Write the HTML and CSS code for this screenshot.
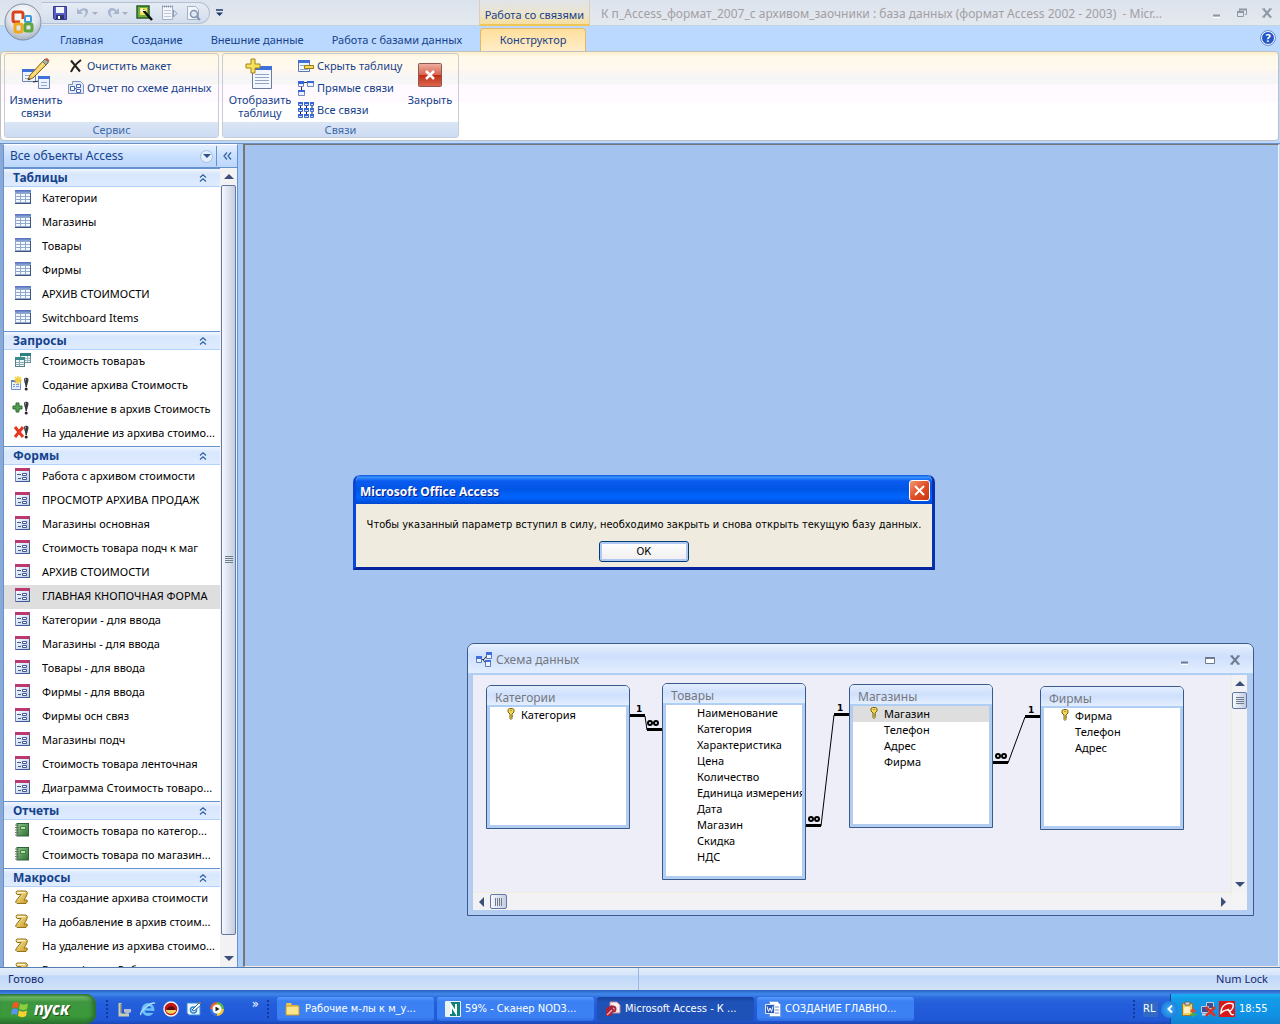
FILE: index.html
```
<!DOCTYPE html>
<html lang="ru">
<head>
    <meta charset="UTF-8">
    <title>Microsoft Access</title>
    <link rel="stylesheet" href="styles.css">
</head>

<body>
    <!-- Иконки, которые повторяются на странице -->
    <svg class="sprite" aria-hidden="true">
        <defs>
            <linearGradient id="g-head" x1="0" y1="0" x2="0" y2="1">
                <stop offset="0" stop-color="#4f6bb5"/>
                <stop offset="1" stop-color="#8fa8e0"/>
            </linearGradient>
            <linearGradient id="g-paper" x1="0" y1="0" x2="1" y2="1">
                <stop offset="0" stop-color="#ffffff"/>
                <stop offset="1" stop-color="#b9cbee"/>
            </linearGradient>
            <linearGradient id="g-gold" x1="0" y1="0" x2="1" y2="1">
                <stop offset="0" stop-color="#fff3a8"/>
                <stop offset="1" stop-color="#c8961e"/>
            </linearGradient>
            <linearGradient id="g-green" x1="0" y1="0" x2="1" y2="1">
                <stop offset="0" stop-color="#8fca8b"/>
                <stop offset="1" stop-color="#2d6b33"/>
            </linearGradient>
            <linearGradient id="g-red" x1="0" y1="0" x2="0" y2="1">
                <stop offset="0" stop-color="#eeb0a4"/>
                <stop offset=".5" stop-color="#d9644f"/>
                <stop offset=".5" stop-color="#c02a14"/>
                <stop offset="1" stop-color="#dd6a50"/>
            </linearGradient>
        </defs>
        <symbol id="i-table" viewBox="0 0 16 14">
            <rect x="0" y="0" width="16" height="14" fill="#93a9cc"/>
            <rect x="0" y="0" width="16" height="3" fill="url(#g-head)"/>
            <path d="M1 4h4v2H1zM6 4h4v2H6zM11 4h4v2h-4zM1 7h4v2H1zM6 7h4v2H6zM11 7h4v2h-4zM1 10h4v2H1zM6 10h4v2H6zM11 10h4v2h-4z" fill="#f4f8ff"/>
            <path d="M0 13.500h16M15.500 3v11" stroke="#3c5580"/>
        </symbol>
        <symbol id="i-form" viewBox="0 0 16 14">
            <rect x=".5" y=".5" width="14" height="13" fill="url(#g-paper)" stroke="#7289b4"/>
            <rect x="0" y="0" width="15" height="3" fill="#b83a6e"/>
            <path d="M2 6.500h4M3 10.500h3" stroke="#44598a"/>
            <path d="M7.500 5.500h4v2h-4zM7.500 9.500h4v2h-4z" fill="#fff" stroke="#44598a"/>
            <path d="M14.500 3v10.500H1" fill="none" stroke="#41598c"/>
        </symbol>
        <symbol id="i-query" viewBox="0 0 16 14">
            <rect x="5.500" y=".5" width="10" height="9" fill="#eef6f6" stroke="#6b8f98"/>
            <path d="M5 0h11v3H5z" fill="#2f7f80"/>
            <path d="M7 5.500h8M7 7.500h8M12.500 3v6" stroke="#9db8c0"/>
            <rect x=".5" y="4.500" width="9" height="9" fill="#eef6f6" stroke="#58808a"/>
            <path d="M0 4h10v3H0z" fill="#3b8b8b"/>
            <path d="M1 9.500h8M1 11.500h8M4.500 7v6" stroke="#8caab4"/>
        </symbol>
        <symbol id="i-bang" viewBox="0 0 6 14">
            <path d="M1 2.500C1 0 5.500 0 5.500 2.500C5.500 5 4 7 4 10H2.500C2.500 7 1 5 1 2.500z" fill="#33363c"/>
            <path d="M2 2.500c0-1 1-1 1-1v3z" fill="#b9bcc2"/>
            <circle cx="3.200" cy="12" r="1.500" fill="#222"/>
        </symbol>
        <symbol id="i-make" viewBox="0 0 20 16">
            <path d="M1.500 4.500h9v9h-9z" fill="#e6effc" stroke="#6c8dc6"/>
            <path d="M1 4h10v2H1z" fill="#5b80c8"/>
            <path d="M3 8.500h2M6 8.500h3M3 10.500h2M6 10.500h3" stroke="#7d9bd0"/>
            <path d="M8 0v8M4 4h8M5 1l6 6M11 1L5 7" stroke="#f1cf3a" stroke-width="1.500"/>
            <use href="#i-bang" x="13" y="1" width="6" height="14"/>
        </symbol>
        <symbol id="i-append" viewBox="0 0 20 16">
            <path d="M6 3h3v3h3v3H9v3H6V9H3V6h3z" fill="#55a04f" stroke="#2d6b33"/>
            <use href="#i-bang" x="13" y="1" width="6" height="14"/>
        </symbol>
        <symbol id="i-delete" viewBox="0 0 20 16">
            <path d="M5 3l8 10M13 3L5 13" stroke="#e8361e" stroke-width="3"/>
            <use href="#i-bang" x="13" y="1" width="6" height="14"/>
        </symbol>
        <symbol id="i-report" viewBox="0 0 14 14">
            <rect x="2" y=".5" width="11.500" height="12.500" fill="url(#g-green)" stroke="#2f6236"/>
            <path d="M5.500 3.500h5v3h-5z" fill="#b9dfb2" stroke="#3e7c42"/>
            <path d="M0 2h4M0 4.500h4M0 7h4M0 9.500h4M0 12h4" stroke="#6d7a6f"/>
        </symbol>
        <symbol id="i-macro" viewBox="0 0 14 14">
            <path d="M2 1h9l1.500 1.500-1 3.500-2.500 4h3l.5 1.500L11 13.500H2L.5 12 2 9.500l4-5H2L1 2.500z" fill="url(#g-gold)" stroke="#94701f"/>
            <path d="M3 2.500h7" stroke="#fffbe0"/>
        </symbol>
        <symbol id="i-chev" viewBox="0 0 8 8">
            <path d="M1 3.500L4 .8l3 2.700M1 7.500L4 4.800l3 2.700" fill="none" stroke="#33609f" stroke-width="1.200"/>
        </symbol>
        <symbol id="i-key" viewBox="0 0 8 12">
            <path d="M1 1.500L2.500.5h3L7 1.500V4L5 6v4.500l-1 1-1-1V6L1 4z" fill="#f0d74e" stroke="#77621a"/>
            <path d="M3.500 2.500h1M5 8h1" stroke="#77621a"/>
        </symbol>
        <symbol id="i-min" viewBox="0 0 10 10">
            <path d="M1 7.500h7" stroke="currentColor" stroke-width="2"/>
            <path d="M1 9.500h7" stroke="#fff"/>
        </symbol>
        <symbol id="i-x" viewBox="0 0 10 10">
            <path d="M1.500 1l7 8M8.500 1l-7 8" stroke="currentColor" stroke-width="2"/>
            <path d="M0 1h3M7 1h3M0 9h3M7 9h3" stroke="currentColor"/>
        </symbol>
    </svg>

    <div class="app">
        <!-- Заголовок окна -->
        <header class="titlebar">
            <button class="office" aria-label="Office">
                <svg width="38" height="38" viewBox="0 0 38 38">
                    <defs>
                        <radialGradient id="g-orb" cx=".5" cy=".3" r=".7">
                            <stop offset="0" stop-color="#ffffff"/>
                            <stop offset=".6" stop-color="#dfe4ec"/>
                            <stop offset="1" stop-color="#a8b2c2"/>
                        </radialGradient>
                    </defs>
                    <circle cx="19" cy="19" r="18" fill="url(#g-orb)" stroke="#7e8da6"/>
                    <rect x="9" y="9" width="10" height="10" rx="2" fill="none" stroke="#d9441c" stroke-width="3"/>
                    <rect x="21" y="13" width="6" height="6" rx="1" fill="none" stroke="#3f97dc" stroke-width="2"/>
                    <rect x="11" y="21" width="7" height="8" rx="1.500" fill="none" stroke="#f2a81d" stroke-width="3"/>
                    <rect x="21" y="21" width="7" height="7" rx="1.500" fill="none" stroke="#5da73c" stroke-width="3"/>
                    <rect x="16" y="16" width="4" height="4" fill="#fff4d8"/>
                </svg>
            </button>
            <div class="qat">
                <button aria-label="Сохранить">
                    <svg width="16" height="16" viewBox="0 0 16 16">
                        <path d="M1.500 1.500h13v13h-12l-1-1z" fill="#5a5fc4" stroke="#34388f"/>
                        <path d="M4 2h8v6H4z" fill="#f3f5ff"/>
                        <path d="M4 10h8v4H4z" fill="#30346e"/>
                        <path d="M6 11h2v3H6z" fill="#fff"/>
                    </svg>
                </button>
                <button aria-label="Отменить">
                    <svg width="22" height="16" viewBox="0 0 22 16">
                        <path d="M1 3v6h6L4.800 6.800C8 4 11 6 9 9.500L7.500 13C12 10 14 5 10 3.500 7 2.500 4.500 4 3.500 5.500z" fill="#a9b6d0"/>
                        <path d="M16 7h6l-3 3z" fill="#a9b0bd"/>
                    </svg>
                </button>
                <button aria-label="Вернуть">
                    <svg width="22" height="16" viewBox="0 0 22 16">
                        <path d="M13 3v6H7l2.200-2.200C6 4 3.500 6 5 9.500L6.500 13C2 11 0 5.500 4 3.500c3-1.200 5.500.5 6.500 2z" fill="#a9b6d0"/>
                        <path d="M16 7h6l-3 3z" fill="#a9b0bd"/>
                    </svg>
                </button>
                <button aria-label="Мастер">
                    <svg width="17" height="16" viewBox="0 0 17 16">
                        <rect x="1" y="1" width="12" height="12" fill="#6fb03c" stroke="#2b5c2b" stroke-width="1.500"/>
                        <path d="M4 3h7v7H4z" fill="#f2e05a"/>
                        <path d="M7 5l9 10" stroke="#111" stroke-width="2.500"/>
                        <path d="M6 3v5M4 5.500h5" stroke="#fff"/>
                    </svg>
                </button>
                <button aria-label="Экспорт">
                    <svg width="17" height="16" viewBox="0 0 17 16">
                        <path d="M1.500 1.500h10v13h-10z" fill="#f4f6fb" stroke="#a3afc4"/>
                        <path d="M1 1.500h11" stroke="#8795ae" stroke-dasharray="1 1" stroke-width="2"/>
                        <path d="M3 5.500h7M3 8.500h7M3 11.500h7" stroke="#c0c9da"/>
                        <path d="M12.500 5l3.500 3.500-3.500 3.500z" fill="#dbe2ef" stroke="#8f9db7"/>
                    </svg>
                </button>
                <button aria-label="Предварительный просмотр">
                    <svg width="16" height="16" viewBox="0 0 16 16">
                        <path d="M1.500 1.500h8l3 3v10h-11z" fill="#f4f6fb" stroke="#a3afc4"/>
                        <circle cx="8" cy="9" r="3.500" fill="#dfe9f6" stroke="#8494b0" stroke-width="1.500"/>
                        <path d="M10.500 11.500l3.500 3.500" stroke="#8494b0" stroke-width="2"/>
                    </svg>
                </button>
            </div>
            <button class="qat-more" aria-label="Настройка панели">
                <svg width="7" height="8" viewBox="0 0 7 8">
                    <path d="M0 1h7" stroke="#1d3a6e" stroke-width="1.500"/>
                    <path d="M0 3.500h7L3.500 7z" fill="#1d3a6e"/>
                </svg>
            </button>
            <div class="context-title">Работа со связями</div>
            <h1>К п_Access_формат_2007_с архивом_заочники : база данных (формат Access 2002 - 2003) &nbsp;- Micr...</h1>
            <div class="win-buttons">
                <button aria-label="Свернуть"><svg width="10" height="10"><use href="#i-min"/></svg></button>
                <button aria-label="Восстановить">
                    <svg width="10" height="10" viewBox="0 0 10 10">
                        <path d="M2.500 3V1.500h7v5H8" fill="none" stroke="currentColor"/>
                        <path d="M2 1.500h8M0 4h7" stroke="currentColor" stroke-width="2"/>
                        <path d="M.5 4.500h6v4h-6z" fill="none" stroke="currentColor"/>
                    </svg>
                </button>
                <button aria-label="Закрыть окно"><svg width="10" height="10"><use href="#i-x"/></svg></button>
            </div>
        </header>

        <!-- Вкладки ленты -->
        <nav class="tabs">
            <a href="#">Главная</a>
            <a href="#">Создание</a>
            <a href="#">Внешние данные</a>
            <a href="#">Работа с базами данных</a>
            <a href="#" class="active">Конструктор</a>
            <button class="help" aria-label="Справка">?</button>
        </nav>

        <!-- Лента -->
        <div class="ribbon">
            <section class="group service">
                <div class="group-body">
                    <button class="large">
                        <svg width="32" height="32" viewBox="0 0 32 32">
                            <path d="M2.500 11.500h13v12h-13z" fill="#eef4ff" stroke="#6f86b4"/>
                            <path d="M2 11h14v3H2z" fill="#3f6fd8"/>
                            <path d="M5 17.500h7M5 20.500h7" stroke="#8ea6d4"/>
                            <path d="M13 24l6-1" stroke="#222"/>
                            <path d="M18.500 18.500h11v12h-11z" fill="#eef4ff" stroke="#6f86b4"/>
                            <path d="M18 18h12v3H18z" fill="#3f6fd8"/>
                            <path d="M21 24.500h6M21 27.500h6" stroke="#8ea6d4"/>
                            <path d="M8 22l2-5L24 2l4 3-15 15z" fill="#f3cf63" stroke="#8c6420"/>
                            <path d="M12 18L25 4" stroke="#fff0b0"/>
                            <path d="M22.500 3.500L25 1l3.500 3L26 7z" fill="#a8b8a0" stroke="#6b6b60"/>
                            <path d="M25 1l2-1 2.500 2.500-1 1.500z" fill="#d05040"/>
                            <path d="M8 22l.8-2 1.400 1.300z" fill="#222"/>
                        </svg>
                        <span>Изменить<br>связи</span>
                    </button>
                    <div class="small-list">
                        <button class="small">
                            <svg width="16" height="16" viewBox="0 0 16 16"><path d="M3 2.500l9 11M13 2C9 5 5 9 3 14" fill="none" stroke="#222" stroke-width="2"/></svg>
                            Очистить макет
                        </button>
                        <button class="small">
                            <svg width="16" height="16" viewBox="0 0 16 16">
                                <path d="M.5 4.500h4v-3h8l3 3v9H.5z" fill="#e4ecfb" stroke="#7e93bd"/>
                                <path d="M2.500 6.500h4v4h-4zM8.500 4.500h4v3h-4zM8.500 9.500h4v3h-4z" fill="#fff" stroke="#4667b0"/>
                                <path d="M6.500 8.500h2" stroke="#4667b0"/>
                            </svg>
                            Отчет по схеме данных
                        </button>
                    </div>
                </div>
                <h2>Сервис</h2>
            </section>
            <section class="group links">
                <div class="group-body">
                    <button class="large">
                        <svg width="32" height="32" viewBox="0 0 32 32">
                            <path d="M8.500 8.500h19v22h-19z" fill="#f2f6ff" stroke="#6b7c9c"/>
                            <path d="M8 8h20v4H8z" fill="#3f6fd8"/>
                            <path d="M11 16.500h14M11 19.500h14M11 22.500h14M11 25.500h14" stroke="#93a3c2"/>
                            <path d="M7 1h4v5h5v4h-5v5H7v-5H2V6h5z" fill="#f7e15c" stroke="#a58316"/>
                        </svg>
                        <span>Отобразить<br>таблицу</span>
                    </button>
                    <div class="small-list">
                        <button class="small">
                            <svg width="16" height="16" viewBox="0 0 16 16">
                                <path d="M.5 2.500h11v11H.5z" fill="#f2f6ff" stroke="#5a76b0"/>
                                <path d="M0 2h12v3H0z" fill="#3f6fd8"/>
                                <path d="M2 7.500h8M2 11.500h8" stroke="#8ea6d4"/>
                                <path d="M6.500 7.500h9v3h-9z" fill="#f7dc5c" stroke="#9a7a14"/>
                            </svg>
                            Скрыть таблицу
                        </button>
                        <button class="small">
                            <svg width="16" height="16" viewBox="0 0 16 16">
                                <path d="M.5 1.500h5v5h-5zM9.500 1.500h6v5h-6zM.5 10.500h6v5h-6z" fill="#eef4ff" stroke="#7088bb"/>
                                <path d="M0 1h6v3H0zM0 10h7v2H0zM9 1h7v2H9z" fill="#3565d8"/>
                                <path d="M6 2.500h3M3.500 7v3" stroke="#333"/>
                            </svg>
                            Прямые связи
                        </button>
                        <button class="small">
                            <svg width="16" height="16" viewBox="0 0 16 16">
                                <path d="M.5.5h4v3h-4zM6.500.5h4v3h-4zM12.500.5h3v3h-3zM.5 6.500h4v3h-4zM6.500 6.500h4v3h-4zM12.500 6.500h3v3h-3zM.5 12.500h4v3h-4zM6.500 12.500h4v3h-4zM12.500 12.500h3v3h-3z" fill="#cddcff" stroke="#4266c0"/>
                                <path d="M0 1h16M0 7h16M0 13h16" stroke="#3565d8" stroke-width="2" stroke-dasharray="5 1"/>
                                <path d="M2.500 4v2M8.500 4v2M14 4v2M2.500 10v2M8.500 10v2M14 10v2" stroke="#222"/>
                            </svg>
                            Все связи
                        </button>
                    </div>
                    <button class="large close">
                        <svg width="32" height="32" viewBox="0 0 32 32">
                            <rect x="4.500" y="5.500" width="23" height="23" rx="1" fill="url(#g-red)" stroke="#8c5a50"/>
                            <path d="M12 13l8 8M20 13l-8 8" stroke="#fff" stroke-width="2.500"/>
                        </svg>
                        <span>Закрыть</span>
                    </button>
                </div>
                <h2>Связи</h2>
            </section>
        </div>

        <div class="main">
            <!-- Область навигации -->
            <aside class="navpane">
                <div class="nav-head">
                    <span>Все объекты Access</span>
                    <button class="round" aria-label="Фильтр"><svg width="8" height="4" viewBox="0 0 8 4"><path d="M0 0h8L4 4z" fill="#33508c"/></svg></button>
                    <button class="fold" aria-label="Свернуть область">
                        <svg width="9" height="8" viewBox="0 0 9 8"><path d="M4 .5L1 4l3 3.500M8 .5L5 4l3 3.500" fill="none" stroke="#33609f" stroke-width="1.200"/></svg>
                    </button>
                </div>
                <div class="nav-body">
                    <div class="nav-list">
                        <h3>Таблицы <svg width="8" height="8"><use href="#i-chev"/></svg></h3>
                        <ul>
                            <li><a href="#"><svg width="16" height="14"><use href="#i-table"/></svg>Категории</a></li>
                            <li><a href="#"><svg width="16" height="14"><use href="#i-table"/></svg>Магазины</a></li>
                            <li><a href="#"><svg width="16" height="14"><use href="#i-table"/></svg>Товары</a></li>
                            <li><a href="#"><svg width="16" height="14"><use href="#i-table"/></svg>Фирмы</a></li>
                            <li><a href="#"><svg width="16" height="14"><use href="#i-table"/></svg>АРХИВ СТОИМОСТИ</a></li>
                            <li><a href="#"><svg width="16" height="14"><use href="#i-table"/></svg>Switchboard Items</a></li>
                        </ul>
                        <h3>Запросы <svg width="8" height="8"><use href="#i-chev"/></svg></h3>
                        <ul>
                            <li><a href="#"><svg width="16" height="14"><use href="#i-query"/></svg>Стоимость товараъ</a></li>
                            <li><a href="#"><svg width="20" height="16"><use href="#i-make"/></svg>Содание архива Стоимость</a></li>
                            <li><a href="#"><svg width="20" height="16"><use href="#i-append"/></svg>Добавление в архив Стоимость</a></li>
                            <li><a href="#"><svg width="20" height="16"><use href="#i-delete"/></svg>На удаление из архива стоимо...</a></li>
                        </ul>
                        <h3>Формы <svg width="8" height="8"><use href="#i-chev"/></svg></h3>
                        <ul>
                            <li><a href="#"><svg width="16" height="14"><use href="#i-form"/></svg>Работа с архивом стоимости</a></li>
                            <li><a href="#"><svg width="16" height="14"><use href="#i-form"/></svg>ПРОСМОТР АРХИВА ПРОДАЖ</a></li>
                            <li><a href="#"><svg width="16" height="14"><use href="#i-form"/></svg>Магазины основная</a></li>
                            <li><a href="#"><svg width="16" height="14"><use href="#i-form"/></svg>Стоимость товара подч к маг</a></li>
                            <li><a href="#"><svg width="16" height="14"><use href="#i-form"/></svg>АРХИВ СТОИМОСТИ</a></li>
                            <li class="selected"><a href="#"><svg width="16" height="14"><use href="#i-form"/></svg>ГЛАВНАЯ КНОПОЧНАЯ ФОРМА</a></li>
                            <li><a href="#"><svg width="16" height="14"><use href="#i-form"/></svg>Категории - для ввода</a></li>
                            <li><a href="#"><svg width="16" height="14"><use href="#i-form"/></svg>Магазины - для ввода</a></li>
                            <li><a href="#"><svg width="16" height="14"><use href="#i-form"/></svg>Товары - для ввода</a></li>
                            <li><a href="#"><svg width="16" height="14"><use href="#i-form"/></svg>Фирмы - для ввода</a></li>
                            <li><a href="#"><svg width="16" height="14"><use href="#i-form"/></svg>Фирмы осн связ</a></li>
                            <li><a href="#"><svg width="16" height="14"><use href="#i-form"/></svg>Магазины подч</a></li>
                            <li><a href="#"><svg width="16" height="14"><use href="#i-form"/></svg>Стоимость товара ленточная</a></li>
                            <li><a href="#"><svg width="16" height="14"><use href="#i-form"/></svg>Диаграмма Стоимость товаро...</a></li>
                        </ul>
                        <h3>Отчеты <svg width="8" height="8"><use href="#i-chev"/></svg></h3>
                        <ul>
                            <li><a href="#"><svg width="14" height="14"><use href="#i-report"/></svg>Стоимость товара по категор...</a></li>
                            <li><a href="#"><svg width="14" height="14"><use href="#i-report"/></svg>Стоимость товара по магазин...</a></li>
                        </ul>
                        <h3>Макросы <svg width="8" height="8"><use href="#i-chev"/></svg></h3>
                        <ul>
                            <li><a href="#"><svg width="14" height="14"><use href="#i-macro"/></svg>На создание архива стоимости</a></li>
                            <li><a href="#"><svg width="14" height="14"><use href="#i-macro"/></svg>На добавление в архив стоим...</a></li>
                            <li><a href="#"><svg width="14" height="14"><use href="#i-macro"/></svg>На удаление из архива стоимо...</a></li>
                            <li><a href="#"><svg width="14" height="14"><use href="#i-macro"/></svg>Вход в форму Работа</a></li>
                        </ul>
                    </div>
                    <div class="scroll vertical">
                        <i class="arrow up"></i>
                        <div class="thumb"><i class="grip"></i></div>
                        <i class="arrow down"></i>
                    </div>
                </div>
            </aside>

            <!-- Рабочая область с окнами -->
            <main class="workspace">
                <section class="window schema">
                    <header>
                        <svg width="16" height="16" viewBox="0 0 16 16">
                            <path d="M.5 4.500h5v6h-5zM10.500.5h5v6h-5zM9.500 8.500h5v6h-5z" fill="#eef4ff" stroke="#5d7dc4"/>
                            <path d="M0 4h6v3H0zM10 0h6v3h-6zM9 8h6v2H9z" fill="#3f6fd8"/>
                            <path d="M6 7.500h2l2-3M7 7.500l2 3" fill="none" stroke="#333"/>
                        </svg>
                        <h2>Схема данных</h2>
                        <div class="win-buttons">
                            <button aria-label="Свернуть схему"><svg width="10" height="10"><use href="#i-min"/></svg></button>
                            <button aria-label="Развернуть схему">
                                <svg width="10" height="10" viewBox="0 0 10 10"><path d="M.5 2.500h9v6h-9z" fill="#fff" stroke="currentColor"/><path d="M0 3h10" stroke="currentColor" stroke-width="2"/></svg>
                            </button>
                            <button aria-label="Закрыть схему"><svg width="10" height="10"><use href="#i-x"/></svg></button>
                        </div>
                    </header>
                    <div class="schema-body">
                        <div class="canvas">
                            <svg class="relations" width="758" height="218">
                                <g stroke="#000" stroke-width="3">
                                    <path d="M157 40.500h15M174 54.500h15M333 150.500h15M361 39.500h15M520 87.500h15M552 41.500h15"/>
                                </g>
                                <g stroke="#000" fill="none">
                                    <path d="M172 41l2 14M348 151l13-111M535 88l17-46"/>
                                </g>
                                <text x="163" y="37">1</text>
                                <text x="364" y="36">1</text>
                                <text x="555" y="38">1</text>
                                <g fill="none" stroke="#000" stroke-width="2">
                                    <path d="M175 48a2 2 0 1 0 4 0a2 2 0 1 0-4 0M181 48a2 2 0 1 0 4 0a2 2 0 1 0-4 0"/>
                                    <path d="M336 144a2 2 0 1 0 4 0a2 2 0 1 0-4 0M342 144a2 2 0 1 0 4 0a2 2 0 1 0-4 0"/>
                                    <path d="M523 81a2 2 0 1 0 4 0a2 2 0 1 0-4 0M529 81a2 2 0 1 0 4 0a2 2 0 1 0-4 0"/>
                                </g>
                            </svg>
                            <div class="entity categories">
                                <h3>Категории</h3>
                                <ul>
                                    <li><svg width="8" height="12"><use href="#i-key"/></svg>Категория</li>
                                </ul>
                            </div>
                            <div class="entity goods">
                                <h3>Товары</h3>
                                <ul>
                                    <li>Наименование</li>
                                    <li>Категория</li>
                                    <li>Характеристика</li>
                                    <li>Цена</li>
                                    <li>Количество</li>
                                    <li>Единица измерения</li>
                                    <li>Дата</li>
                                    <li>Магазин</li>
                                    <li>Скидка</li>
                                    <li>НДС</li>
                                </ul>
                            </div>
                            <div class="entity shops">
                                <h3>Магазины</h3>
                                <ul>
                                    <li class="selected"><svg width="8" height="12"><use href="#i-key"/></svg>Магазин</li>
                                    <li>Телефон</li>
                                    <li>Адрес</li>
                                    <li>Фирма</li>
                                </ul>
                            </div>
                            <div class="entity firms">
                                <h3>Фирмы</h3>
                                <ul>
                                    <li><svg width="8" height="12"><use href="#i-key"/></svg>Фирма</li>
                                    <li>Телефон</li>
                                    <li>Адрес</li>
                                </ul>
                            </div>
                        </div>
                        <div class="scroll vertical">
                            <i class="arrow up"></i>
                            <div class="thumb"><i class="grip"></i></div>
                            <i class="arrow down"></i>
                        </div>
                        <div class="scroll horizontal">
                            <i class="arrow left"></i>
                            <div class="thumb"><i class="grip"></i></div>
                            <i class="arrow right"></i>
                        </div>
                    </div>
                </section>

                <section class="window dialog" role="dialog" aria-labelledby="dlg">
                    <header>
                        <h2 id="dlg">Microsoft Office Access</h2>
                        <button class="xp-close" aria-label="Закрыть сообщение">
                            <svg width="11" height="11" viewBox="0 0 11 11"><path d="M1 1l9 9M10 1l-9 9" stroke="#fff" stroke-width="2"/></svg>
                        </button>
                    </header>
                    <div class="dialog-body">
                        <p>Чтобы указанный параметр вступил в силу, необходимо закрыть и снова открыть текущую базу данных.</p>
                        <button class="ok">ОК</button>
                    </div>
                </section>
            </main>
        </div>

        <footer class="statusbar">
            <span>Готово</span>
            <span>Num Lock</span>
        </footer>

        <!-- Панель задач -->
        <div class="taskbar">
            <button class="start">
                <svg width="18" height="18" viewBox="0 0 18 18">
                    <path d="M2 3c2-1.500 4-1.500 6 0L7 8.500c-2-1.200-4-1.200-6 0z" fill="#ee5a24"/>
                    <path d="M9 3.500c2.500 1.500 5 1.500 8 0L16 9c-2.500 1.500-5 1.500-8 0z" fill="#8ccf3c"/>
                    <path d="M1 9.500c2-1.500 4-1.500 6 0l-1 5.500c-2-1.200-4-1.200-6 0z" fill="#5b94f0"/>
                    <path d="M8 10.500c2.500 1.500 5 1.500 8 0L15 16c-2.500 1.500-5 1.500-8 0z" fill="#fcd02e"/>
                </svg>
                пуск
            </button>
            <i class="handle"></i>
            <div class="quick">
                <svg width="16" height="16" viewBox="0 0 16 16"><path d="M3 2v12h9" fill="none" stroke="#c8cdb4" stroke-width="3"/><path d="M4 3v9" stroke="#6d7464"/><path d="M7 8h7v3l-4 2-3-2z" fill="#b9bccb"/></svg>
                <svg width="16" height="16" viewBox="0 0 16 16"><circle cx="8" cy="8.500" r="5" fill="none" stroke="#6cc0f5" stroke-width="3"/><path d="M4 8.500h10" stroke="#6cc0f5" stroke-width="2.500"/><path d="M10 11h6" stroke="#245edb" stroke-width="2"/><path d="M1 14C-1 11 12 0 15 2.500" fill="none" stroke="#a8ddfa" stroke-width="1.500"/></svg>
                <svg width="16" height="16" viewBox="0 0 16 16"><circle cx="8" cy="8" r="7" fill="#c01818" stroke="#f4f0e8" stroke-width="1.500"/><path d="M3 9h10c0 5-10 5-10 0z" fill="#f7d25a"/><path d="M4 9c0-5 8-5 8 0z" fill="#5c0a0a"/></svg>
                <svg width="16" height="16" viewBox="0 0 16 16"><path d="M1 2h11l2 2v10H3l-2-2z" fill="#eaf5fc" stroke="#3b8fd0"/><circle cx="7.500" cy="9" r="3" fill="none" stroke="#2f86c8" stroke-width="1.500"/><path d="M6 9l7-7 2 2-7 6z" fill="#fff" stroke="#246ca8"/><path d="M12 2l2-1 1 2z" fill="#e88a20"/></svg>
                <svg width="16" height="16" viewBox="0 0 16 16"><path d="M8 8V1a7 7 0 0 1 7 7z" fill="#5cb84a"/><path d="M8 8h7a7 7 0 0 1-7 7z" fill="#f6c52e"/><path d="M8 8v7a7 7 0 0 1-7-7z" fill="#3a78d8"/><path d="M8 8H1a7 7 0 0 1 7-7z" fill="#e8622a"/><circle cx="8" cy="8" r="4.500" fill="#fff"/><path d="M6.500 5.500v5l4-2.500z" fill="#222"/></svg>
            </div>
            <span class="more">»</span>
            <i class="handle"></i>
            <div class="tasks">
                <button>
                    <svg width="16" height="16" viewBox="0 0 16 16"><path d="M1 4c0-2 1-2 2-2h3l1 2h6v3H1z" fill="#f2c84a"/><path d="M1 14V5h13v9z" fill="#fbe58a" stroke="#c8972a"/></svg>
                    <span>Рабочие м-лы к м_у...</span>
                </button>
                <button>
                    <svg width="16" height="16" viewBox="0 0 16 16"><path d="M.5.500h15v15H.5z" fill="#12807a" stroke="#e8f2f2"/><path d="M1 1h4v14H1z" fill="#e8f2f2"/><path d="M6 13V4l5 8V3" fill="none" stroke="#fff" stroke-width="2"/></svg>
                    <span>59% - Сканер NOD3...</span>
                </button>
                <button class="active">
                    <svg width="16" height="16" viewBox="0 0 16 16"><path d="M5 1h7l3 3v8H5z" fill="#f8f0f2" stroke="#c28894"/><path d="M1 7l6-3 2 5-3 6H1z" fill="#a8243c"/><circle cx="8" cy="8" r="2.500" fill="none" stroke="#a8243c" stroke-width="2"/><path d="M2 14l5-5" stroke="#f0a8b0" stroke-width="1.500"/></svg>
                    <span>Microsoft Access - К ...</span>
                </button>
                <button>
                    <svg width="16" height="16" viewBox="0 0 16 16"><path d="M4.500.5h8l3 3v12h-11z" fill="#fff" stroke="#7f9fd8"/><path d="M10 6h4M10 9h4M10 12h4" stroke="#6c8ed0"/><path d="M.5 3.500h9v9h-9z" fill="#2c58b8" stroke="#dce8ff"/><path d="M2 5.500l1.500 5L5 7l1.500 3.500L8 5.500" fill="none" stroke="#fff"/></svg>
                    <span>СОЗДАНИЕ ГЛАВНО...</span>
                </button>
            </div>
            <i class="handle"></i>
            <span class="lang">RL</span>
            <div class="tray">
                <button class="tray-more" aria-label="Показать значки">
                    <svg width="6" height="8" viewBox="0 0 6 8"><path d="M5 .5L1.500 4 5 7.500" fill="none" stroke="#fff" stroke-width="2"/></svg>
                </button>
                <svg width="16" height="16" viewBox="0 0 16 16"><path d="M1.500 2.500h10v12h-10z" fill="#f0cf6a" stroke="#a07a20"/><path d="M4 1h5v3H4z" fill="#d8d8d8" stroke="#666"/><path d="M3 6h6v6H3z" fill="#fff2bc"/><path d="M12 7l3 3-3 3-3-3z" fill="#e04a3a"/><path d="M12 11v5M9 13.500h7" stroke="#4ab040" stroke-width="1.500"/></svg>
                <svg width="16" height="16" viewBox="0 0 16 16"><path d="M6.500 1.500h7v6h-7zM1.500 5.500h7v6h-7z" fill="#3f4f8c" stroke="#c4cde4"/><path d="M2 13.500h7" stroke="#d4d8e4" stroke-width="2"/><path d="M6 6l9 9M15 6l-9 9" stroke="#e03020" stroke-width="2.500"/></svg>
                <svg width="16" height="16" viewBox="0 0 16 16"><path d="M0 0h16v16H0z" fill="#d81818"/><path d="M2 12C2 4 8 1 14 3c1 3-1 6-3 7-2-2-6-1-9 2zM9 8l3 5c1 1 2 1 2.500 0" fill="none" stroke="#fff" stroke-width="1.500"/></svg>
                <time>18:55</time>
            </div>
        </div>
    </div>
</body>
</html>
```
FILE: styles.css
```
html,
body {
    margin: 0;
    padding: 0;
    height: 100%;
}

body {
    overflow: hidden;
    font: 11px/16px "Noto Sans", "Open Sans", sans-serif;
    color: #000;
}

h1, h2, h3, p, ul {
    margin: 0;
    padding: 0;
    font-size: inherit;
    font-weight: normal;
    list-style: none;
}

a {
    color: inherit;
    text-decoration: none;
}

button {
    padding: 0;
    border: 0;
    background: none;
    color: inherit;
    font: inherit;
}

svg {
    display: block;
    flex: none;
}

.sprite {
    position: absolute;
    width: 0;
    height: 0;
}

.app {
    display: flex;
    flex-direction: column;
    height: 100vh;
    background: #bbd9ff;
}

/* Заголовок */
.titlebar {
    position: relative;
    display: flex;
    height: 26px;
    box-sizing: border-box;
    border-bottom: 1px solid #c3d3e0;
    background: linear-gradient(#dbe3ee, #e2e6ee 60%, #e2eaee);
}

.office {
    position: absolute;
    top: 3px;
    left: 4px;
    z-index: 2;
}

.qat {
    display: flex;
    gap: 8px;
    align-items: center;
    box-sizing: border-box;
    width: 168px;
    height: 22px;
    margin: 2px 0 0 42px;
    padding-left: 10px;
    border: 1px solid #b4c0d4;
    border-left: 0;
    border-radius: 0 12px 12px 0;
    background: linear-gradient(#e6ecf5, #d3ddec);
}

.qat-more {
    margin-left: 6px;
}

.context-title {
    width: 111px;
    height: 26px;
    margin-left: 256px;
    border: solid #d8d0b8;
    border-width: 0 1px;
    border-bottom: 2px solid #efc556;
    box-sizing: border-box;
    color: #15428b;
    line-height: 29px;
    text-align: center;
    white-space: nowrap;
    background: linear-gradient(#e0e4ea, #ece4cc 60%, #f6dfa0);
}

.titlebar h1 {
    flex: 1;
    min-width: 0;
    margin-left: 11px;
    overflow: hidden;
    color: #a0a0a4;
    font-size: 12px;
    line-height: 28px;
    white-space: nowrap;
}

.win-buttons {
    display: flex;
    gap: 15px;
    align-items: center;
    color: #8d97a6;
}

.titlebar .win-buttons {
    padding-right: 8px;
}

/* Вкладки */
.tabs {
    display: flex;
    gap: 28px;
    height: 25px;
    padding: 0 5px 0 60px;
    color: #15428b;
    line-height: 28px;
    background: #bbd9ff;
}

.tabs a {
    white-space: nowrap;
}

.tabs .active {
    width: 106px;
    height: 23px;
    margin: 2px 0 0 -10px;
    box-sizing: border-box;
    border: 1px solid #e6b860;
    border-bottom: 0;
    border-radius: 4px 4px 0 0;
    line-height: 22px;
    text-align: center;
    background: linear-gradient(#ffdf9c, #ffedc8);
}

.help {
    width: 14px;
    height: 14px;
    margin: 5px 0 0 auto;
    border: 1px solid #fff;
    border-radius: 50%;
    outline: 1px solid #6f8fd0;
    color: #fff;
    font-weight: bold;
    line-height: 12px;
    background: #2456c8;
}

/* Лента */
.ribbon {
    display: flex;
    gap: 3px;
    height: 90px;
    box-sizing: border-box;
    margin-right: 1px;
    padding: 1px 3px 2px;
    border: 1px solid #c0c0c0;
    border-radius: 4px;
    background: linear-gradient(#ffefc8, #fff9ea 5px, #fffaee 17px, #fff6ee 18px, #f6f6f6 24px, #f6f6f6 32px, #fefaff 33px, #fefaff 50px, #fff 51px);
}

.group {
    display: flex;
    flex-direction: column;
    box-sizing: border-box;
    border: 1px solid #c8ccd4;
    border-radius: 3px;
    color: #15428b;
}

.service {
    width: 215px;
}

.links {
    width: 237px;
}

.group-body {
    display: flex;
    flex: 1;
    padding: 1px 4px 0;
}

.group h2 {
    height: 15px;
    color: #3e6aaa;
    line-height: 15px;
    text-align: center;
    background: linear-gradient(#dbe6f5, #cddcf4);
}

.large {
    display: flex;
    flex-direction: column;
    align-items: center;
    width: 54px;
    padding-top: 3px;
    line-height: 13px;
}

.links .large:first-child {
    width: 66px;
}

.large span {
    padding-top: 3px;
}

.links .close {
    width: 48px;
}

.small-list {
    flex: 1;
    padding-left: 5px;
}

.small {
    display: flex;
    gap: 3px;
    align-items: center;
    height: 22px;
    white-space: nowrap;
}

/* Основная часть */
.main {
    display: flex;
    flex: 1;
    min-height: 0;
    margin-top: 2px;
    border-top: 1px solid #6f8fc4;
}

.navpane {
    display: flex;
    flex-direction: column;
    box-sizing: border-box;
    width: 243px;
    padding-left: 3px;
    border-right: 5px solid #a9cdf8;
    background: #8ba9d6;
}

.nav-head {
    display: flex;
    align-items: center;
    height: 24px;
    box-sizing: border-box;
    padding-left: 6px;
    border: 1px solid #6593cf;
    border-top-color: #fff;
    color: #15428b;
    font-size: 12px;
    background: linear-gradient(#e6f0ff, #c8dffe 50%, #bdd7fb);
}

.nav-head span {
    flex: 1;
}

.round {
    display: flex;
    align-items: center;
    justify-content: center;
    width: 13px;
    height: 13px;
    box-sizing: border-box;
    border: 1px solid #a8bedf;
    border-radius: 50%;
    background: #e4effd;
}

.fold {
    display: flex;
    align-items: center;
    justify-content: center;
    width: 21px;
    height: 20px;
    margin-left: 3px;
    border-left: 1px solid #6593cf;
}

.nav-body {
    display: flex;
    flex: 1;
    min-height: 0;
    border-left: 1px solid #6593cf;
    border-right: 1px solid #6593cf;
    background: #fff;
}

.nav-body .scroll {
    padding: 0 1px;
}

.nav-list {
    flex: 1;
    overflow: hidden;
}

.nav-list h3 {
    display: flex;
    justify-content: space-between;
    align-items: center;
    height: 19px;
    box-sizing: border-box;
    padding: 0 13px 0 9px;
    border-top: 1px solid #6593cf;
    border-bottom: 1px solid #b0d2ff;
    color: #15428b;
    font-size: 12px;
    font-weight: bold;
    background: linear-gradient(#f0f6ff, #d8e7fd 30%, #dfebff);
}

.nav-list a {
    display: grid;
    grid-template-columns: 33px 1fr;
    align-items: center;
    height: 24px;
    box-sizing: border-box;
    padding: 0 0 2px 5px;
    white-space: nowrap;
}

.nav-list a svg {
    margin: 0 0 2px 6px;
}

.nav-list a svg[width="20"] {
    margin-left: 1px;
}

.selected {
    background: #dedede;
}

/* Полосы прокрутки */
.scroll {
    display: flex;
    align-items: center;
    background: #f2f2f4;
}

.vertical {
    flex-direction: column;
    width: 15px;
}

.arrow {
    flex: none;
    box-sizing: border-box;
    border: 5px solid transparent;
}

.up {
    border-top: 0;
    border-bottom-color: #3c4f78;
    margin: 6px 0;
}

.down {
    border-bottom: 0;
    border-top-color: #3c4f78;
    margin: auto 0 6px;
}

.left {
    border-left: 0;
    border-right-color: #3c4f78;
    margin: 0 6px;
}

.right {
    border-right: 0;
    border-left-color: #3c4f78;
    margin: 0 6px 0 auto;
}

.thumb {
    display: flex;
    align-items: center;
    justify-content: center;
    box-sizing: border-box;
    width: 15px;
    height: 17px;
    border: 1px solid #6378a6;
    border-radius: 2px;
    background: linear-gradient(90deg, #f6f8fb, #dde3ee 50%, #c3cddf);
}

.navpane .thumb {
    height: 750px;
}

.grip {
    width: 8px;
    height: 8px;
    background: repeating-linear-gradient(#6f7f90 0 1px, transparent 1px 2px);
}

.horizontal .grip {
    background: repeating-linear-gradient(90deg, #6f7f90 0 1px, transparent 1px 2px);
}

/* Рабочая область */
.workspace {
    position: relative;
    flex: 1;
    min-width: 0;
    margin-right: 1px;
    border: solid #767676;
    border-width: 1px 0 0 2px;
    border-right: 1px solid #f4f4f4;
    border-bottom: 1px solid #f4e8e0;
    overflow: hidden;
    background: #a5c3ef;
}

.window {
    position: absolute;
    box-sizing: border-box;
    display: flex;
    flex-direction: column;
}

.schema {
    top: 498px;
    left: 222px;
    width: 787px;
    height: 273px;
    border: 1px solid #3b5a8c;
    border-radius: 7px 7px 0 0;
    background: #b3ccf2;
    overflow: hidden;
}

.schema > header {
    display: flex;
    align-items: center;
    gap: 4px;
    height: 30px;
    box-sizing: border-box;
    padding: 2px 13px 0 8px;
    border-bottom: 1px solid #acd0f8;
    color: #74787e;
    background: linear-gradient(#e8f1ff, #d6e5fc 8px, #cfe0fd 12px, #e3eefe);
}

.schema h2 {
    flex: 1;
    font-size: 12px;
}

.schema .win-buttons {
    color: #6f7b8e;
}

.schema-body {
    display: grid;
    grid-template: 1fr 17px / 1fr 15px;
    flex: 1;
    margin: 1px 6px 5px 5px;
    background: #f4f4f6;
}

.canvas {
    position: relative;
    overflow: hidden;
    border-right: 1px solid #f1ebdc;
    border-bottom: 1px solid #f1ebdc;
    background: #eeeef8;
}

.schema .horizontal .thumb {
    width: 17px;
    height: 15px;
}

.relations {
    position: absolute;
    top: 0;
    left: 0;
    font: bold 9px "DejaVu Sans", sans-serif;
}

/* Таблица на схеме */
.entity {
    position: absolute;
    display: flex;
    flex-direction: column;
    box-sizing: border-box;
    width: 144px;
    height: 144px;
    border: 1px solid #3b5a8c;
    border-radius: 5px 5px 0 0;
    overflow: hidden;
    background: #b3ccf2;
}

.entity h3 {
    height: 19px;
    padding-left: 8px;
    border-bottom: 1px solid #acd0f8;
    color: #74787e;
    font-size: 12px;
    line-height: 24px;
    background: linear-gradient(#e3eeff, #cfe0fd 9px, #e3eefe);
}

.entity ul {
    flex: 1;
    margin: 1px 3px 3px;
    overflow: hidden;
    background: #fff;
}

.entity li {
    display: flex;
    height: 16px;
    padding-left: 31px;
    white-space: nowrap;
}

.entity li svg {
    margin: 1px 6px 0 -14px;
}

.categories { left: 13px; top: 10px; }
.goods { left: 189px; top: 8px; height: 197px; }
.shops { left: 376px; top: 9px; }
.firms { left: 567px; top: 11px; }

/* Сообщение в стиле XP */
.dialog {
    top: 330px;
    left: 108px;
    width: 582px;
    height: 95px;
    border: 3px solid #0a46d8;
    border-top: 0;
    border-right-color: #0831b0;
    border-bottom-color: #0424a0;
    border-radius: 7px 7px 0 0;
    overflow: hidden;
    background: #efebde;
    font-family: "DejaVu Sans Condensed", "DejaVu Sans", sans-serif;
}

.dialog header {
    display: flex;
    align-items: center;
    justify-content: space-between;
    height: 29px;
    margin: 0 -3px;
    padding: 0 5px 0 7px;
    background: linear-gradient(#0a50d8, #3a94ff 2px, #0a5cf0 6px, #0055e5 14px, #0066ff 22px, #0048d0);
}

.dialog h2 {
    padding-top: 4px;
    color: #fff;
    font-family: "Noto Sans", sans-serif;
    font-size: 12px;
    font-weight: bold;
    text-shadow: 1px 1px #0a1883;
}

.xp-close {
    display: flex;
    align-items: center;
    justify-content: center;
    width: 21px;
    height: 21px;
    margin-top: 2px;
    box-sizing: border-box;
    border: 1px solid #fff;
    border-radius: 3px;
    background: linear-gradient(135deg, #f09878, #e25028 50%, #c83810);
}

.dialog-body {
    display: flex;
    flex-direction: column;
    align-items: center;
    gap: 8px;
    padding-top: 13px;
    white-space: nowrap;
}

.ok {
    width: 90px;
    height: 21px;
    border: 1px solid #003c74;
    border-radius: 3px;
    box-shadow: inset 0 0 0 2px #b0c8f4;
    background: linear-gradient(#fff, #f0eeee);
}

/* Строка состояния */
.statusbar {
    display: flex;
    justify-content: space-between;
    height: 23px;
    box-sizing: border-box;
    padding: 0 12px 0 8px;
    border-top: 1px solid #567db0;
    color: #15286b;
    line-height: 22px;
    background: linear-gradient(#e4eefc, #d5e4f8 7px, #c0d8fa 8px, #d2e2f8);
}

/* Половины строки */
.statusbar span:first-child {
    width: 630px;
    border-right: 1px solid #9cb8e0;
}

.taskbar {
    display: flex;
    align-items: center;
    height: 34px;
    box-sizing: border-box;
    padding-top: 4px;
    color: #fff;
    font-family: "DejaVu Sans Condensed", "DejaVu Sans", sans-serif;
    background: linear-gradient(#2a62c0, #4088ea 4px, #2a68dc 8px, #245edb 14px, #2058d8 30px, #1a48b4);
}

.start {
    display: flex;
    gap: 5px;
    align-items: center;
    width: 96px;
    height: 30px;
    padding-left: 11px;
    border-radius: 0 10px 10px 0;
    font: italic bold 17px/28px "Noto Sans", sans-serif;
    text-shadow: 1px 1px 1px #1c4a1c;
    background: linear-gradient(#3a7a3a, #6cb868 3px, #3f9640 8px, #3a9a3a 22px, #2a7230);
    box-shadow: inset -3px 0 4px #2a6c2c;
}

.handle {
    width: 5px;
    height: 20px;
    margin: 0 6px 0 9px;
    background: radial-gradient(circle, #123a98 1px, transparent 1px) 0 0 / 4px 4px;
}

.quick {
    display: flex;
    gap: 7px;
    padding-left: 1px;
}

.more {
    flex: none;
    width: 34px;
    padding-bottom: 10px;
    font-size: 13px;
    text-align: right;
}

.more + .handle {
    margin-left: 7px;
}

.tasks {
    display: flex;
    flex: 1;
    gap: 3px;
    min-width: 0;
}

.tasks button {
    display: flex;
    gap: 4px;
    align-items: center;
    width: 157px;
    height: 24px;
    padding-left: 8px;
    border-radius: 3px;
    white-space: nowrap;
    background: linear-gradient(#5c9cff, #3c81f3 4px, #3c81f3 20px, #2f6ae0);
}

.tasks .active {
    background: linear-gradient(#16409c, #1e52b7 5px, #1e52b7);
}

.lang {
    width: 15px;
    margin-right: 12px;
    background: #316ac5;
}

.tray {
    display: flex;
    gap: 3px;
    align-items: center;
    width: 110px;
    height: 30px;
    box-sizing: border-box;
    border-left: 1px solid #0a4a9c;
    background: linear-gradient(#1ab0f4, #129ce8 5px, #0f90e4 22px, #1280d0);
}

.tray-more {
    display: flex;
    align-items: center;
    justify-content: center;
    flex: none;
    width: 17px;
    height: 17px;
    margin-left: -10px;
    border-radius: 50%;
    background: radial-gradient(circle, #3cb0f4, #1468d0);
}

.tray time {
    margin-left: 1px;
}
```
